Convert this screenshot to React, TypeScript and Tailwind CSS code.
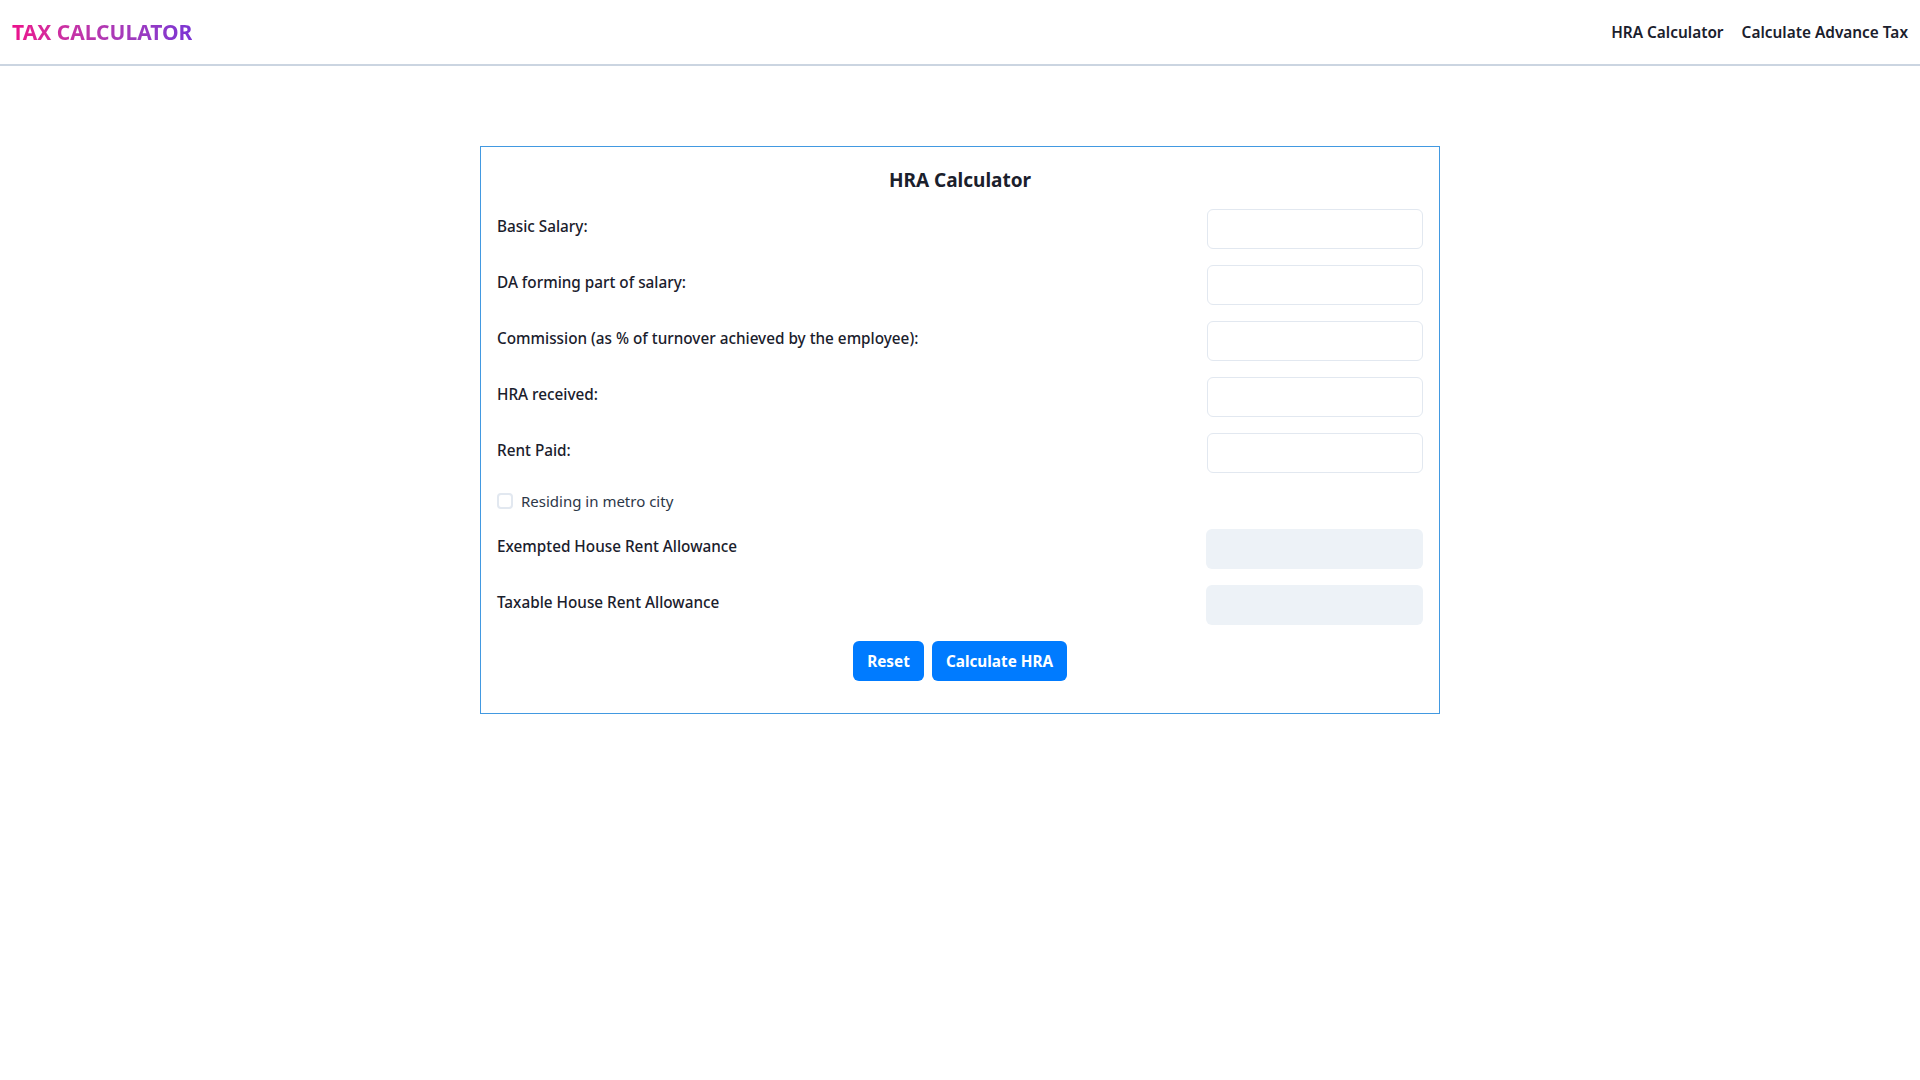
import { useState } from 'react'

const fields = [
  'Basic Salary:',
  'DA forming part of salary:',
  'Commission (as % of turnover achieved by the employee):',
  'HRA received:',
  'Rent Paid:',
]

const results = ['Exempted House Rent Allowance', 'Taxable House Rent Allowance']

export default function App() {
  const [metro, setMetro] = useState(false)

  return (
    <div className="min-h-screen bg-white font-['Noto_Sans',sans-serif] text-[#1a202c]">
      <header className="flex h-[66px] items-center justify-between border-b-2 border-[#cbd5e1] px-3 pt-[2px]">
        <span className="bg-gradient-to-r from-[#ec0c8c] to-[#7b34d4] bg-clip-text text-[21px] font-bold text-transparent">
          TAX CALCULATOR
        </span>
        <nav className="flex items-center gap-[18px] text-[15.4px] font-semibold">
          <a href="#">HRA Calculator</a>
          <a href="#">Calculate Advance Tax</a>
        </nav>
      </header>

      <main className="flex justify-center pt-20">
        <section className="w-[960px] border border-[#4299e1] px-4 pb-4 pt-[19px]">
          <h1 className="mb-[15px] text-center text-[19px] font-bold leading-7">HRA Calculator</h1>

          {fields.map((label) => (
            <div key={label} className="mb-4 flex items-start justify-between">
              <label className="pt-[5px] text-[15.3px] font-medium leading-6">{label}</label>
              <input
                type="text"
                className="h-10 w-[216px] rounded-md border border-[#e2e8f0] bg-white px-3 outline-none"
              />
            </div>
          ))}

          <label className="mb-4 flex h-6 items-center gap-2 text-[15px] text-[#2d3748]">
            <input
              type="checkbox"
              checked={metro}
              onChange={(e) => setMetro(e.target.checked)}
              className="size-4 appearance-none rounded-sm border-2 border-[#e2e8f0] bg-white"
            />
            Residing in metro city
          </label>

          {results.map((label) => (
            <div key={label} className="mb-4 flex items-start justify-between">
              <label className="pt-[5px] text-[15.3px] font-medium leading-6">{label}</label>
              <input
                type="text"
                disabled
                className="h-10 w-[217px] rounded-md bg-[#edf2f7] px-3 outline-none"
              />
            </div>
          ))}

          <div className="mb-4 flex justify-center gap-2">
            <button className="h-10 w-[71px] rounded-md bg-[#007bff] text-[15.3px] font-bold text-white">
              Reset
            </button>
            <button className="h-10 w-[135px] rounded-md bg-[#007bff] text-[15.3px] font-bold text-white">
              Calculate HRA
            </button>
          </div>
        </section>
      </main>
    </div>
  )
}
